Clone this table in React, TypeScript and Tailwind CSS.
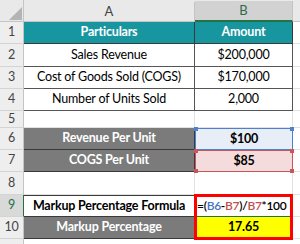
import type { ReactNode } from "react";

type RowProps = { num: string; h: string; active?: boolean; children?: ReactNode };

function Row({ num, h, active, children }: RowProps) {
  return (
    <div className={`flex ${h}`}>
      <div
        className={
          active
            ? "w-[24px] shrink-0 flex items-center justify-center border-b border-b-[#d4d4d4] border-r border-r-[#217346] bg-[#d9d9d9] text-[#217346]"
            : "w-[24px] shrink-0 flex items-center justify-center border-b border-b-[#d4d4d4] border-r border-r-[#c4c4c4] bg-[#eeeeee] text-[#444444]"
        }
      >
        {num}
      </div>
      {children}
      <div className="flex-1 border-b border-[#e1e1e1] bg-white" />
    </div>
  );
}

const cellA = "w-[171px] shrink-0 flex items-center justify-center whitespace-nowrap border-b border-r";
const cellB = "w-[98px] shrink-0 flex items-center justify-center whitespace-nowrap border-b border-r";

function Handle({ pos, color }: { pos: string; color: string }) {
  return <span className={`absolute w-[4px] h-[4px] ${pos} ${color}`} />;
}

export default function App() {
  return (
    <div className="relative w-[300px] h-[244px] overflow-hidden bg-white font-[Lato,sans-serif] text-[12.5px] tracking-[-0.2px] text-black">
      {/* column headers */}
      <div className="flex h-[22px] bg-[#e9e9e9] text-[#444444] text-[13px] tracking-normal">
        <div className="relative w-[24px] shrink-0 border-r border-b border-[#c4c4c4]">
          <svg className="absolute left-[9px] top-[7px]" width="13" height="13" viewBox="0 0 13 13">
            <polygon points="13,0 13,13 0,13" fill="#b4b4b4" />
          </svg>
        </div>
        <div className="w-[171px] shrink-0 flex flex-col">
          <div className="h-[5px]" />
          <div className="flex-1 flex items-center justify-center border-r border-b border-[#c4c4c4]">A</div>
        </div>
        <div className="w-[98px] shrink-0 flex flex-col">
          <div className="h-[5px]" />
          <div className="flex-1 flex items-center justify-center bg-[#d2d2d2] border-r border-[#c4c4c4] border-b-2 border-b-[#217346] text-[#2f6b4a]">
            B
          </div>
        </div>
        <div className="flex-1 flex flex-col">
          <div className="h-[5px]" />
          <div className="flex-1 border-b border-[#c4c4c4]" />
        </div>
      </div>

      <Row num="1" h="h-[22px]">
        <div className={`${cellA} bg-[#1896a0] border-[#3a3a3a] font-bold text-white`}>Particulars</div>
        <div className={`${cellB} bg-[#1896a0] border-[#3a3a3a] font-bold text-white`}>Amount</div>
      </Row>
      <Row num="2" h="h-[23px]">
        <div className={`${cellA} border-[#555555]`}>Sales Revenue</div>
        <div className={`${cellB} border-[#555555]`}>$200,000</div>
      </Row>
      <Row num="3" h="h-[22px]">
        <div className={`${cellA} border-[#555555]`}>Cost of Goods Sold (COGS)</div>
        <div className={`${cellB} border-[#555555]`}>$170,000</div>
      </Row>
      <Row num="4" h="h-[22px]">
        <div className={`${cellA} border-[#555555]`}>Number of Units Sold</div>
        <div className={`${cellB} border-[#555555]`}>2,000</div>
      </Row>
      <Row num="5" h="h-[17px]">
        <div className={`${cellA} border-[#e1e1e1]`} />
        <div className={`${cellB} border-[#e1e1e1]`} />
      </Row>
      <Row num="6" h="h-[22px]">
        <div className={`${cellA} bg-[#7b7b7b] border-[#3a3a3a] font-bold text-white`}>Revenue Per Unit</div>
        <div className="relative w-[98px] shrink-0 flex items-center justify-center border border-[#4f7fd0] bg-[#e8eef8] font-bold">
          $100
          <Handle pos="-left-[2px] -top-[2px]" color="bg-[#4f7fd0]" />
          <Handle pos="-right-[2px] -top-[2px]" color="bg-[#4f7fd0]" />
        </div>
      </Row>
      <Row num="7" h="h-[22px]">
        <div className={`${cellA} bg-[#7b7b7b] border-[#3a3a3a] font-bold text-white`}>COGS Per Unit</div>
        <div className="relative w-[98px] shrink-0 flex items-center justify-center border border-[#c9545a] bg-[#f5dcdc] font-bold">
          $85
          <Handle pos="-left-[2px] -top-[2px]" color="bg-[#c9545a]" />
          <Handle pos="-right-[2px] -top-[2px]" color="bg-[#c9545a]" />
          <Handle pos="-left-[2px] -bottom-[2px]" color="bg-[#c9545a]" />
          <Handle pos="-right-[2px] -bottom-[2px]" color="bg-[#c9545a]" />
        </div>
      </Row>
      <Row num="8" h="h-[23px]">
        <div className={`${cellA} border-[#e1e1e1]`} />
        <div className={`${cellB} border-[#e1e1e1]`} />
      </Row>
      <Row num="9" h="h-[22px]" active>
        <div className={`${cellA} border-[#3a3a3a] border-t font-bold`}>Markup Percentage Formula</div>
        <div className="w-[98px] shrink-0 flex items-center justify-start pl-[2px] whitespace-nowrap border-b border-r border-[#217346] text-[12px] font-semibold tracking-[-0.3px]">
          =(<span className="text-[#4472c4]">B6</span>-<span className="text-[#c0504d]">B7</span>)/<span className="text-[#c0504d]">B7</span>*100
        </div>
      </Row>
      <Row num="10" h="h-[22px]">
        <div className={`${cellA} bg-[#7b7b7b] border-[#3a3a3a] font-bold text-white`}>Markup Percentage</div>
        <div className={`${cellB} bg-[#ffff00] border-[#3a3a3a] font-bold`}>17.65</div>
      </Row>
      <Row num="" h="h-[22px]" />

      {/* highlighted formula range */}
      <div className="absolute left-[194px] top-[194px] w-[99px] h-[46px] border-[3px] border-[#ff0000]" />
    </div>
  );
}
